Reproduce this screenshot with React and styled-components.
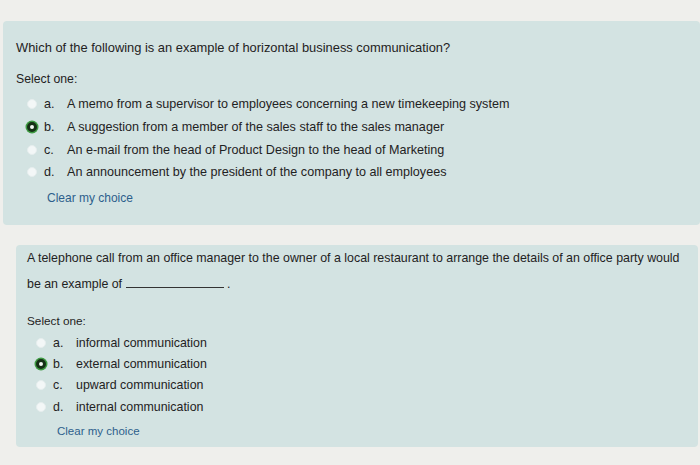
import React from 'react';
import styled, { createGlobalStyle } from 'styled-components';

const Global = createGlobalStyle`
  body {
    margin: 0;
    background: #efefec;
    font-family: "Liberation Sans", Arial, sans-serif;
    color: #1f2222;
  }
`;

const Page = styled.div`
  width: 700px;
  height: 465px;
  overflow: hidden;
  padding-top: 21px;
  box-sizing: border-box;
  display: flex;
  flex-direction: column;
  gap: 20px;
`;

const Card = styled.div`
  margin-left: ${p => p.$left}px;
  width: ${p => 700 - p.$left - p.$right}px;
  height: ${p => p.$h}px;
  box-sizing: border-box;
  background: #d3e3e2;
  border-radius: 4px;
  padding: ${p => p.$pad};
  font-size: ${p => p.$fs}px;
  display: flex;
  flex-direction: column;
`;

const Question = styled.div`
  line-height: ${p => p.$lh}px;
`;

const Blank = styled.span`
  display: inline-block;
  width: 98px;
  border-bottom: 1px solid #333;
  margin: 0 3px 0 4px;
  height: 11px;
`;

const Prompt = styled.div`
  margin-top: ${p => p.$mt}px;
  line-height: 18px;
  font-size: 0.95em;
`;

const Options = styled.div`
  display: flex;
  flex-direction: column;
  margin-top: ${p => p.$mt}px;
  padding-left: ${p => p.$indent}px;
  font-size: ${p => p.$fs}px;
`;

const Option = styled.div`
  display: flex;
  align-items: center;
  height: ${p => p.$h}px;
`;

const Radio = styled.span`
  width: 10px;
  height: 10px;
  border-radius: 50%;
  box-sizing: border-box;
  flex-shrink: 0;
  ${p => p.$on
    ? `border: 3px solid #163016; background: #f4f8f4; box-shadow: 0 0 0 1.5px #3f9b43;`
    : `border: 1px solid #e6eeee; background: #f3f7f7;`}
`;

const Letter = styled.span`
  width: ${p => p.$w}px;
  padding-left: 7px;
  box-sizing: border-box;
  flex-shrink: 0;
`;

const ClearLink = styled.a`
  color: #2d5f8c;
  font-size: 0.93em;
  text-decoration: none;
  margin-top: ${p => p.$mt}px;
  margin-left: ${p => p.$ml}px;
`;

const q1 = [
  'A memo from a supervisor to employees concerning a new timekeeping system',
  'A suggestion from a member of the sales staff to the sales manager',
  'An e-mail from the head of Product Design to the head of Marketing',
  'An announcement by the president of the company to all employees',
];

const q2 = [
  'informal communication',
  'external communication',
  'upward communication',
  'internal communication',
];

const App = () => {
  return (
    <Page>
      <Global />
      <Card $left={3} $right={0} $h={204} $pad="18px 13px" $fs={12.9}>
        <Question $lh={18}>Which of the following is an example of horizontal business communication?</Question>
        <Prompt $mt={13}>Select one:</Prompt>
        <Options $mt={5} $indent={11} $fs={12.6}>
          {q1.map((t, i) => (
            <Option key={i} $h={22.7}>
              <Radio $on={i === 1} />
              <Letter $w={30}>{'abcd'[i]}.</Letter>
              <span>{t}</span>
            </Option>
          ))}
        </Options>
        <ClearLink $mt={7} $ml={31} href="#">Clear my choice</ClearLink>
      </Card>
      <Card $left={16} $right={2} $h={202} $pad="0px 11px" $fs={12.4}>
        <Question $lh={26}>
          A telephone call from an office manager to the owner of a local restaurant to arrange the details of an office party would be an example of<Blank />.
        </Question>
        <Prompt $mt={15}>Select one:</Prompt>
        <Options $mt={2} $indent={9} $fs={12.4}>
          {q2.map((t, i) => (
            <Option key={i} $h={21.3}>
              <Radio $on={i === 1} />
              <Letter $w={30}>{'abcd'[i]}.</Letter>
              <span>{t}</span>
            </Option>
          ))}
        </Options>
        <ClearLink $mt={8} $ml={30} href="#">Clear my choice</ClearLink>
      </Card>
    </Page>
  );
};

export default App;
